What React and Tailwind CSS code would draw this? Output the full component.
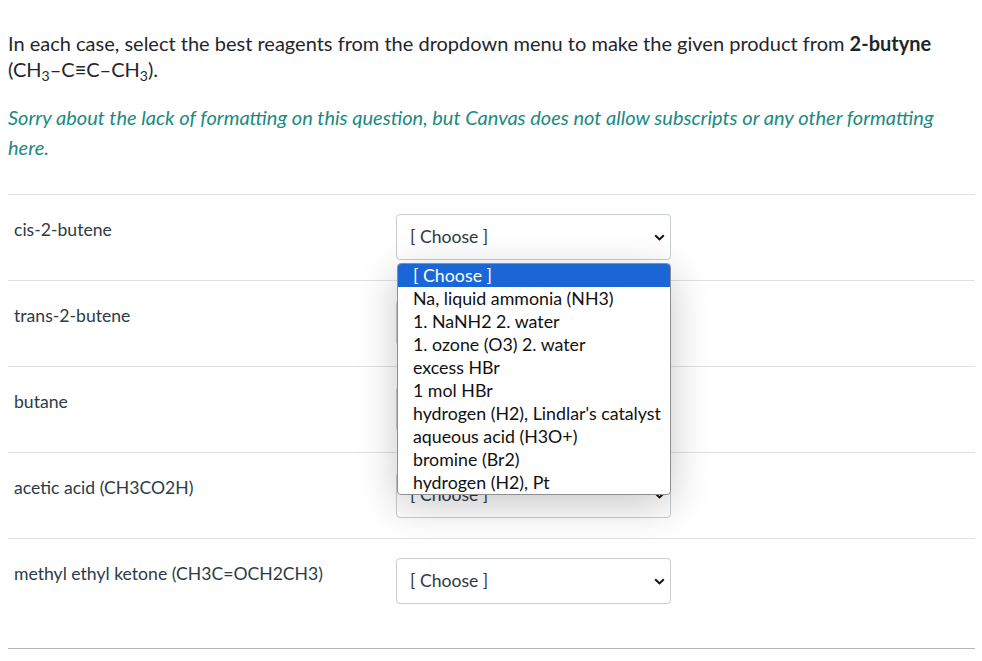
import React from "react";

const OPTIONS = [
  "[ Choose ]",
  "Na, liquid ammonia (NH3)",
  "1. NaNH2 2. water",
  "1. ozone (O3) 2. water",
  "excess HBr",
  "1 mol HBr",
  "hydrogen (H2), Lindlar's catalyst",
  "aqueous acid (H3O+)",
  "bromine (Br2)",
  "hydrogen (H2), Pt",
];

const PRODUCTS = [
  "cis-2-butene",
  "trans-2-butene",
  "butane",
  "acetic acid (CH3CO2H)",
  "methyl ethyl ketone (CH3C=OCH2CH3)",
];

function Chevron() {
  return (
    <svg width="11" height="7" viewBox="0 0 11 7" className="shrink-0">
      <path d="M1.2 1.2 L5.5 5.4 L9.8 1.2" fill="none" stroke="#111" strokeWidth="2" />
    </svg>
  );
}

function FakeSelect({ open }) {
  return (
    <div className="relative">
      <div className="flex h-[46px] w-[275px] items-center justify-between rounded-[4px] border border-[#c7cdd1] bg-white pl-[13px] pr-[5px] text-[17.6px] text-[#2d3b45]">
        <span>[ Choose ]</span>
        <Chevron />
      </div>
      {open && (
        <div className="absolute left-[1px] top-[49px] z-10 w-[274px] overflow-hidden rounded-[4px] border border-[#8f8f8f] bg-white shadow-[0_10px_40px_rgba(0,0,0,0.22)]">
          {OPTIONS.map((o, i) => (
            <div
              key={o}
              className={`h-[23px] whitespace-nowrap pl-[15px] text-[17.8px] leading-[23px] ${
                i === 0 ? "bg-[#1a66d6] text-white" : "text-[#111]"
              }`}
            >
              {o}
            </div>
          ))}
        </div>
      )}
    </div>
  );
}

export default function App() {
  return (
    <div className="min-h-[661px] bg-white pl-2 pr-[7px] pt-[30px] font-['Lato','Noto_Sans',sans-serif] text-[#2d3b45]">
      <p className="text-[20px] leading-[26px] text-[#1f262b]">
        In each case, select the best reagents from the dropdown menu to make the given product from{" "}
        <strong>2-butyne</strong> (CH<sub className="text-[14px]">3</sub>–C≡C–CH<sub className="text-[14px]">3</sub>).
      </p>
      <p className="mt-[20px] max-w-[950px] text-[20px] italic leading-[30px] text-[#1b8a80]">
        Sorry about the lack of formatting on this question, but Canvas does not allow subscripts or any other
        formatting here.
      </p>

      <div className="mt-[32px] border-b border-[#b5b5b5] pb-[24px]">
        {PRODUCTS.map((p, i) => (
          <div key={p} className="flex items-start border-t border-[#dfe2e4] pb-5 pl-1.5 pt-[19px]">
            <div className="w-[382px] pt-[4px] text-[17.6px] leading-6">{p}</div>
            <FakeSelect open={i === 0} />
          </div>
        ))}
      </div>
    </div>
  );
}
